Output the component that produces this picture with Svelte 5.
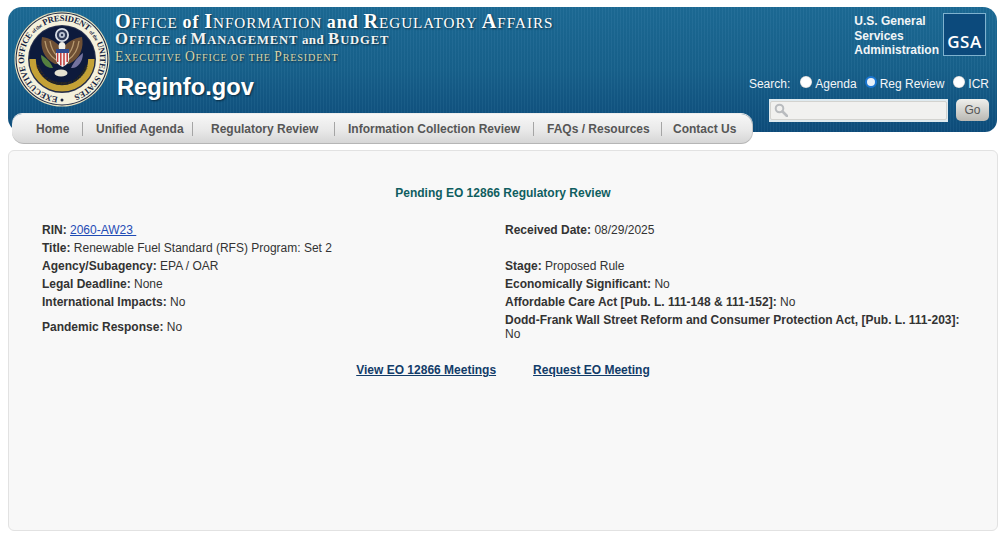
<script>
  const nav = [
    { label: 'Home', w: 71, pad: 24 },
    { label: 'Unified Agenda', w: 110, pad: 13 },
    { label: 'Regulatory Review', w: 142, pad: 18 },
    { label: 'Information Collection Review', w: 199, pad: 13 },
    { label: 'FAQs / Resources', w: 128, pad: 13 },
    { label: 'Contact Us', w: 90, pad: 11 }
  ];
  const rows = [
    [['RIN:', null, true], ['Received Date:', '08/29/2025']],
    [['Title:', 'Renewable Fuel Standard (RFS) Program: Set 2'], null],
    [['Agency/Subagency:', 'EPA / OAR'], ['Stage:', 'Proposed Rule']],
    [['Legal Deadline:', 'None'], ['Economically Significant:', 'No']],
    [['International Impacts:', 'No'], ['Affordable Care Act [Pub. L. 111-148 & 111-152]:', 'No']],
    [['Pandemic Response:', 'No'], ['Dodd-Frank Wall Street Reform and Consumer Protection Act, [Pub. L. 111-203]:', 'No']]
  ];
</script>

<div class="page">
  <header class="banner">
    <svg class="seal" viewBox="0 0 96 96" aria-hidden="true">
      <defs>
        <path id="ring" d="M 44 85.8 A 38 38 0 1 1 52 85.8" />
        <path id="band" d="M 21.5 52 A 27 27 0 0 0 74.5 52" />
      </defs>
      <circle cx="48" cy="48" r="47.5" fill="#e9e2bf" />
      <circle cx="48" cy="48" r="46.4" fill="#1a2440" />
      <circle cx="48" cy="48" r="45.4" fill="#f5f1dc" />
      <circle cx="48" cy="48" r="34" fill="#2b3350" />
      <circle cx="48" cy="48" r="33" fill="#0d1a3c" />
      <text class="ring-text"><textPath href="#ring" textLength="222">EXECUTIVE OFFICE <tspan class="small">of the</tspan> PRESIDENT <tspan class="small">of the</tspan> UNITED STATES</textPath></text>
      <circle cx="48" cy="89" r="1.5" fill="#1a2440" />
      <path d="M 18.6 48 A 29.4 29.4 0 0 0 77.4 48" fill="none" stroke="#c4a136" stroke-width="6.4" />
      <text class="band-text"><textPath href="#band" startOffset="50%" text-anchor="middle">OFFICE of MANAGEMENT and BUDGET</textPath></text>
      <path d="M48 38 C43 31 36 27 28 26 C26 36 29 47 41 53 L55 53 C67 47 70 36 68 26 C60 27 53 31 48 38 Z" fill="#6e4f34" />
      <path d="M31 30 C32 38 36 45 42 49 M36 30 C37 36 39 41 43 45 M65 30 C64 38 60 45 54 49 M60 30 C59 36 57 41 53 45" fill="none" stroke="#b89a70" stroke-width="1.3" />
      <circle cx="48" cy="24" r="7" fill="#d8dde6" />
      <circle cx="48" cy="24" r="5.2" fill="#2f3a58" />
      <circle cx="48" cy="24" r="3" fill="#bcc4d4" />
      <circle cx="48" cy="24" r="1.2" fill="#2f3a58" />
      <path d="M48 31 c3 0 4 3 3 7 l-6 0 c-1 -4 0 -7 3 -7 Z" fill="#f3f1e8" />
      <path d="M42 38 H55 V48 C55 52 52 54 48.5 56 C45 54 42 52 42 48 Z" fill="#f4f4f4" />
      <path d="M42 38 H55 V42 H42 Z" fill="#2f4a8f" />
      <path d="M43.6 42 V51 M46.8 42 V54.5 M50 42 V54.5 M53.2 42 V51" stroke="#c23a3a" stroke-width="1.5" />
      <path d="M27 44 C31 46 36 50 39 57 C33 58 27 52 27 44 Z" fill="#55803f" />
      <path d="M69 42 C65 45 60 50 57 57 C63 58 69 51 69 42 Z" fill="#73729f" />
      <ellipse cx="47" cy="62" rx="6.5" ry="3.6" fill="#e6e2d2" />
    </svg>

    <div class="titles">
      <div class="line-one"><b class="cap">O</b>FFICE <b>of</b> <b class="cap">I</b>NFORMATION <b>and</b> <b class="cap">R</b>EGULATORY <b class="cap">A</b>FFAIRS</div>
      <div class="line-two"><span class="cap">O</span>FFICE <span class="low">of</span> <span class="cap">M</span>ANAGEMENT <span class="low">and</span> <span class="cap">B</span>UDGET</div>
      <div class="line-three"><span class="cap">E</span>XECUTIVE <span class="cap">O</span>FFICE OF THE <span class="cap">P</span>RESIDENT</div>
      <div class="brand">Reginfo.gov</div>
    </div>

    <div class="tools">
      <div class="gsa-row">
        <div class="gsa-name">U.S. General<br />Services<br />Administration</div>
        <div class="gsa-logo">GSA</div>
      </div>
      <div class="scope">
        <span class="scope-label">Search:</span>
        <label><span class="radio"></span>Agenda</label>
        <label><span class="radio on"></span>Reg Review</label>
        <label><span class="radio"></span>ICR</label>
      </div>
      <div class="search">
        <div class="field-wrap">
          <div class="field">
            <svg class="glass" viewBox="0 0 14 14" aria-hidden="true">
              <circle cx="5.5" cy="5.5" r="3.8" fill="none" stroke="#b9bcbf" stroke-width="2" />
              <path d="M8.5 8.5 L13 13" stroke="#b9bcbf" stroke-width="2.6" stroke-linecap="round" />
            </svg>
          </div>
        </div>
        <button class="go" type="button">Go</button>
      </div>
    </div>
  </header>

  <nav class="nav">
    {#each nav as item, i}
      <span class="nav-item" class:sep={i < nav.length - 1} style="width:{item.w}px;padding-left:{item.pad}px">{item.label}</span>
    {/each}
  </nav>

  <main class="card">
    <h1>Pending EO 12866 Regulatory Review</h1>
    <div class="details">
      {#each rows as row}
        {#each row as cell}
          <div class="cell">
            {#if cell}
              <b>{cell[0]}</b>
              {#if cell[2]}<a class="rin" href="#rin">2060-AW23&nbsp;</a>{:else}{cell[1]}{/if}
            {/if}
          </div>
        {/each}
      {/each}
    </div>
    <div class="links">
      <a href="#meetings">View EO 12866 Meetings</a>
      <a href="#request">Request EO Meeting</a>
    </div>
  </main>
</div>

<style>
  :global(body) {
    margin: 0;
    background: #fff;
  }
  .page {
    width: 1002px;
    height: 537px;
    box-sizing: border-box;
    padding: 7px 4px 0 8px;
    font-family: "Liberation Sans", Arial, sans-serif;
    overflow: hidden;
  }
  .banner {
    display: flex;
    height: 125px;
    width: 989px;
    box-sizing: border-box;
    border-radius: 14px 14px 12px 14px;
    padding: 4px 8px 0 6px;
    background:
      repeating-linear-gradient(90deg, rgba(255,255,255,0.035) 0 1px, rgba(0,0,0,0.025) 1px 3px),
      linear-gradient(180deg, #1c6a95 0%, #17618c 50%, #0d4d7c 100%);
  }
  .seal {
    width: 96px;
    height: 96px;
    flex: none;
  }
  .ring-text {
    font: bold 8.6px "Liberation Serif", serif;
    fill: #14213f;
  }
  .ring-text .small {
    font-size: 5.2px;
  }
  .band-text {
    font: bold 3.6px "Liberation Sans", sans-serif;
    fill: #3d2f10;
  }
  .titles {
    flex: 1;
    padding: 1px 0 0 5px;
    font-family: "Liberation Serif", serif;
    color: #fff;
    text-shadow: 1px 1px 2px rgba(0, 0, 0, 0.55);
    white-space: nowrap;
  }
  .cap {
    font-size: 1.33em;
  }
  .line-one {
    height: 19px;
    line-height: 19px;
    font-size: 15.2px;
    letter-spacing: 0.95px;
  }
  .line-one b:not(.cap) {
    font-size: 18px;
  }
  .line-two {
    height: 18px;
    line-height: 16px;
    font-size: 12.6px;
    font-weight: bold;
    letter-spacing: 0.85px;
    color: #f1f3f3;
  }
  .line-two .low {
    font-size: 13px;
    letter-spacing: 0.4px;
  }
  .line-three {
    height: 16px;
    line-height: 16px;
    font-size: 10.2px;
    letter-spacing: 0.82px;
    color: #d8d4a8;
  }
  .brand {
    margin: 7px 0 0 2px;
    font: bold 23.7px/30px "Liberation Sans", Arial, sans-serif;
    color: #fff;
  }
  .tools {
    width: 260px;
    flex: none;
    display: flex;
    flex-direction: column;
    align-items: flex-end;
    color: #fff;
  }
  .gsa-row {
    display: flex;
    gap: 4px;
    margin-top: 2px;
    margin-right: 3px;
  }
  .gsa-name {
    font-size: 12px;
    font-weight: bold;
    line-height: 14.5px;
    padding-top: 1px;
    color: #f2f5f7;
    white-space: nowrap;
  }
  .gsa-logo {
    width: 43px;
    height: 43px;
    box-sizing: border-box;
    border: 1px solid #7fb2cf;
    background: #0c4a7c;
    font: 600 17px/1 "Open Sans", "Liberation Sans", sans-serif;
    letter-spacing: 0.6px;
    padding-top: 19px;
    text-align: center;
    color: #fff;
  }
  .scope {
    display: flex;
    align-items: center;
    margin-top: 17px;
    font-size: 12px;
    height: 18px;
    white-space: nowrap;
    color: #f4f6f8;
  }
  .scope-label {
    margin-right: 9px;
  }
  .scope label {
    display: flex;
    align-items: center;
    margin-right: 7px;
  }
  .scope label:nth-of-type(2) {
    margin-right: 8px;
  }
  .scope label:last-child {
    margin-right: 0;
  }
  .radio {
    width: 12px;
    height: 12px;
    box-sizing: border-box;
    border-radius: 50%;
    background: #fff;
    margin: -4px 3px 0 1px;
    box-shadow: inset 0 0 1px #777;
  }
  .radio.on {
    border: 2px solid #1a76d2;
    background: #e8f0f8;
    box-shadow: none;
  }
  .search {
    display: flex;
    align-items: center;
    gap: 8px;
    margin-top: 6px;
  }
  .field-wrap {
    width: 179px;
    height: 23px;
    box-sizing: border-box;
    padding: 2px 1px;
    background: #dfeaef;
  }
  .field {
    height: 100%;
    box-sizing: border-box;
    display: flex;
    align-items: center;
    padding-left: 3px;
    background: #f1f1ef;
    border: 1px solid #d3d3cf;
    border-radius: 2px;
  }
  .glass {
    width: 14px;
    height: 14px;
  }
  .go {
    width: 33px;
    height: 22px;
    padding: 0;
    border: 0;
    border-radius: 5px;
    background: linear-gradient(180deg, #efefec, #b9b8b3);
    color: #555;
    font: 12px "Liberation Sans", Arial, sans-serif;
  }
  .nav {
    display: flex;
    align-items: center;
    width: 741px;
    height: 30px;
    margin: -18px 0 0 4px;
    position: relative;
    box-sizing: border-box;
    border-radius: 10px 12px 12px 12px;
    border-bottom: 1px solid #b5b5b5;
    border-right: 1px solid #c5c5c5;
    background: linear-gradient(180deg, #f7f7f7 0%, #e9e9e9 55%, #d6d6d6 100%);
    box-shadow: 0 -1px 0 #ececec;
  }
  .nav-item {
    flex: none;
    box-sizing: border-box;
    height: 14px;
    line-height: 14px;
    font-size: 12px;
    font-weight: bold;
    color: #565656;
    white-space: nowrap;
  }
  .nav-item.sep {
    border-right: 1px solid #a5a5a5;
  }
  .card {
    width: 990px;
    height: 381px;
    margin-top: 6px;
    box-sizing: border-box;
    padding: 35px 33px 0;
    background: #f8f8f8;
    border: 1px solid #e2e2e2;
    border-radius: 6px;
    font-size: 12px;
    color: #333;
  }
  h1 {
    margin: 0;
    font-size: 12px;
    line-height: 14px;
    font-weight: bold;
    text-align: center;
    color: #0f5e60;
  }
  .details {
    display: grid;
    grid-template-columns: 463px 455px;
    grid-template-rows: repeat(5, 18px) 32px;
    margin-top: 21px;
    align-items: center;
  }
  .cell {
    line-height: 14px;
  }
  .rin {
    color: #1f4bb5;
  }
  .links {
    display: flex;
    justify-content: center;
    gap: 37px;
    margin-top: 20px;
  }
  .links a {
    font-weight: bold;
    color: #123c69;
    line-height: 14px;
  }
</style>
